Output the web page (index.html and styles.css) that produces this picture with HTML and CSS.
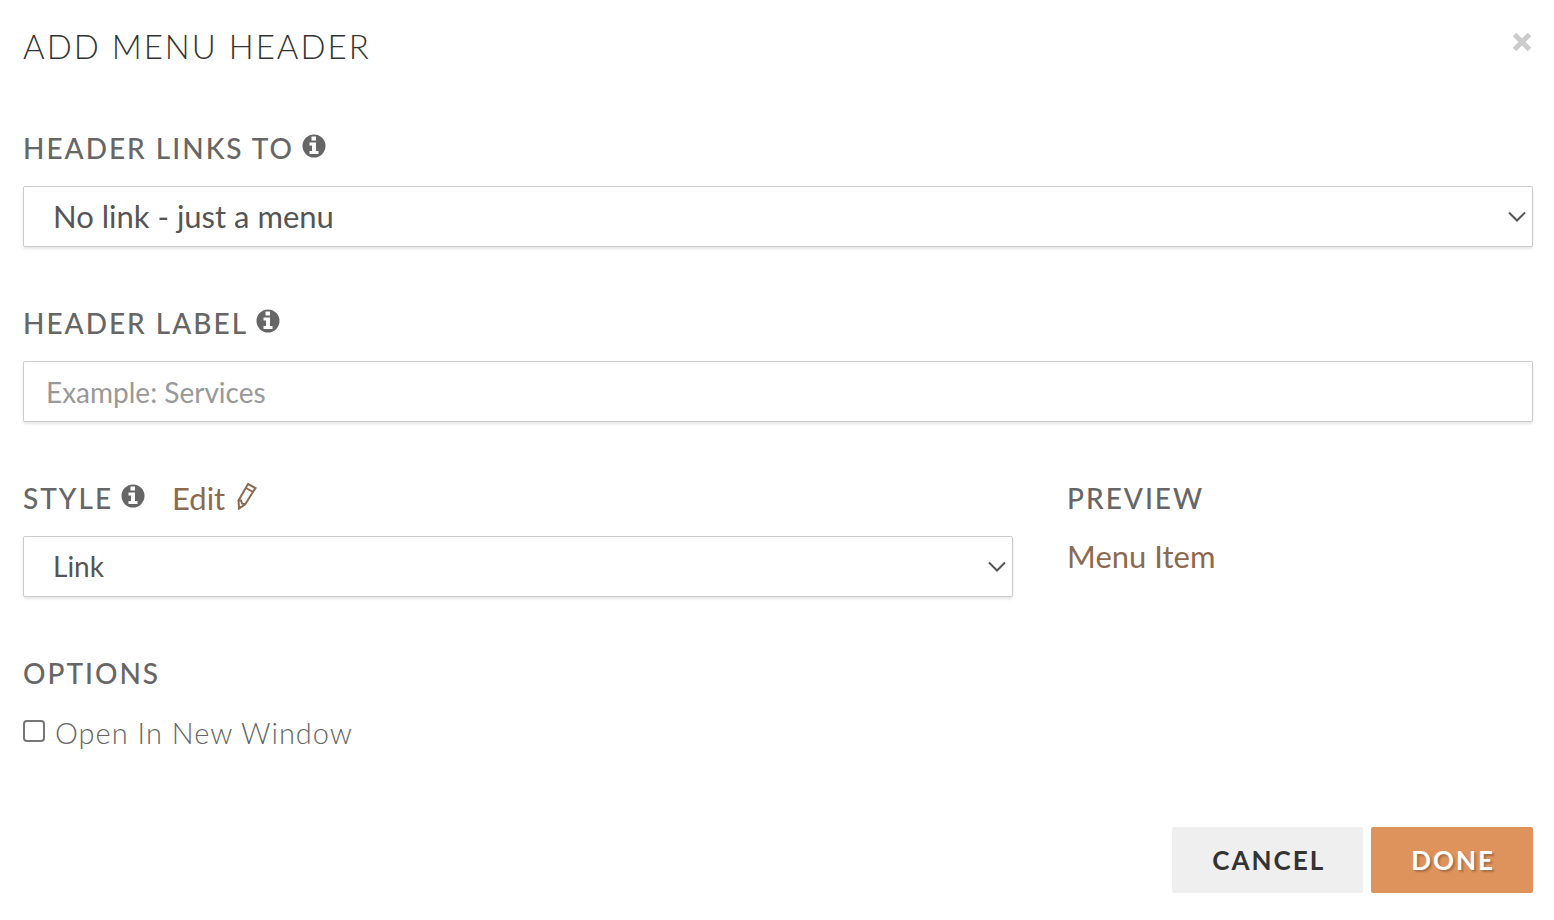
FILE: index.html
```
<!DOCTYPE html>
<html lang="en">
  <head>
    <meta charset="UTF-8">
    <title>Add Menu Header</title>
    <meta name="viewport" content="width=device-width, initial-scale=1">
    <link rel="stylesheet" href="styles.css">
  </head>
  <body>
    <svg class="symbols" aria-hidden="true">
      <symbol id="info" viewBox="0 0 24 24">
        <path fill-rule="evenodd" d="M12 0.5a11.5 11.5 0 1 0 0 23a11.5 11.5 0 1 0 0-23zM9.500 2.500h4.500v4h-4.500zM7.500 8.500h6.500v8.500h2.500v3H7.500v-3h2.500v-5.500H7.500z"/>
      </symbol>
    </svg>
    <form class="dialog">
      <header class="dialog-header">
        <h1>ADD MENU HEADER</h1>
        <button type="button" class="close" aria-label="Close">
          <svg width="20" height="20" viewBox="0 0 20 20"><path d="M2.500 2.500L17.500 17.500M17.500 2.500L2.500 17.500"/></svg>
        </button>
      </header>

      <div class="field">
        <div class="label-row">
          <label for="links-to">HEADER LINKS TO</label>
          <svg class="info"><use href="#info"/></svg>
        </div>
        <div class="select">
          <select id="links-to" class="large">
            <option>No link - just a menu</option>
          </select>
          <svg class="chevron" viewBox="0 0 18 12"><path d="M1 1.500L9 9.500L17 1.500"/></svg>
        </div>
      </div>

      <div class="field">
        <div class="label-row">
          <label for="header-label">HEADER LABEL</label>
          <svg class="info"><use href="#info"/></svg>
        </div>
        <input type="text" id="header-label" placeholder="Example: Services">
      </div>

      <div class="columns">
        <div class="field">
          <div class="label-row">
            <label for="style">STYLE</label>
            <svg class="info"><use href="#info"/></svg>
            <a href="#" class="edit">Edit
              <svg class="pencil" viewBox="0 0 20 28"><path d="M11 2L18.500 6L8 22.500L2 26.500L1.500 18.500zM9 6L16 10M1.500 18.500L4 18.500L5 21.500L8 22.500"/><path class="tip" d="M1.500 23L5 25L2 27z"/></svg>
            </a>
          </div>
          <div class="select">
            <select id="style">
              <option>Link</option>
            </select>
            <svg class="chevron" viewBox="0 0 18 12"><path d="M1 1.500L9 9.500L17 1.500"/></svg>
          </div>
        </div>
        <div class="preview">
          <h2>PREVIEW</h2>
          <a href="#">Menu Item</a>
        </div>
      </div>

      <section class="options">
        <h2>OPTIONS</h2>
        <label class="check">
          <input type="checkbox">
          Open In New Window
        </label>
      </section>

      <footer class="buttons">
        <button type="button" class="cancel">CANCEL</button>
        <button type="submit" class="done">DONE</button>
      </footer>
    </form>
  </body>
</html>
```
FILE: styles.css
```
* {
  box-sizing: border-box;
}
body {
  margin: 0;
  background: white;
  color: #666;
  font-family: Lato, "Open Sans", sans-serif;
  font-size: 28px;
  line-height: 36px;
}
a {
  color: #8c6a4f;
  text-decoration: none;
}
a:hover {
  text-decoration: underline;
}
.symbols {
  display: none;
}
.dialog {
  padding: 24px 21px 27px 23px;
}
.dialog-header {
  display: flex;
  justify-content: space-between;
  align-items: flex-start;
  margin-bottom: 62px;
}
h1 {
  margin: 0;
  color: #333;
  font-size: 33px;
  font-weight: 300;
  line-height: 44px;
  letter-spacing: 2px;
}
.close {
  display: flex;
  padding: 8px 1px;
  border: 0;
  background: none;
  cursor: pointer;
}
.close path {
  fill: none;
  stroke: #ccc;
  stroke-width: 5;
}

/* fields */
.field {
  margin-bottom: 58px;
}
.label-row {
  display: flex;
  align-items: center;
  margin-bottom: 20px;
}
.label-row label,
h2 {
  margin: 0;
  font-size: 28px;
  font-weight: 500;
  line-height: 36px;
  letter-spacing: 2px;
}
.info {
  width: 24px;
  height: 24px;
  margin: 0 0 4px 8px;
  fill: #666;
}
.edit {
  display: flex;
  align-items: center;
  margin-left: 27px;
  font-size: 31px;
}
.pencil {
  width: 20px;
  height: 28px;
  margin: 0 0 4px 12px;
  fill: none;
  stroke: #8c6a4f;
  stroke-width: 2;
}
.pencil .tip {
  fill: #8c6a4f;
  stroke: none;
}
.select {
  position: relative;
}
select,
input[type=text] {
  display: block;
  width: 100%;
  height: 61px;
  border: 1px solid #ccc;
  border-radius: 2px;
  background: white;
  box-shadow: 0 2px 3px rgba(0,0,0,0.1);
  color: #555;
  font: inherit;
  font-size: 28px;
}
select {
  appearance: none;
  padding: 0 48px 2px 29px;
}
select.large {
  font-size: 31px;
}
input[type=text] {
  padding: 0 22px;
}
input::placeholder {
  color: #999;
}
.chevron {
  position: absolute;
  right: 7px;
  top: 25px;
  width: 18px;
  height: 12px;
  fill: none;
  stroke: #555;
  stroke-width: 2;
  pointer-events: none;
}

.columns {
  display: grid;
  grid-template-columns: 68fr 32fr;
  gap: 54px;
}
.preview a {
  display: block;
  margin-top: 22px;
  font-size: 31px;
}

/* options */
.check {
  display: flex;
  align-items: center;
  gap: 10px;
  margin-top: 24px;
  font-size: 29px;
  font-weight: 300;
  letter-spacing: 1px;
}
.check input {
  appearance: none;
  width: 22px;
  height: 22px;
  margin: 0 0 4px;
  border: 2px solid #767676;
  border-radius: 4px;
}
.check input:checked {
  background: #767676;
}

.buttons {
  display: flex;
  justify-content: flex-end;
  gap: 8px;
  margin-top: 76px;
}
.buttons button {
  height: 66px;
  padding: 0 38px 0 40px;
  border: 0;
  border-radius: 2px;
  font: inherit;
  font-size: 26px;
  font-weight: 700;
  letter-spacing: 2px;
  cursor: pointer;
}
.cancel {
  background: #efefef;
  color: #333;
}
.buttons .done {
  background: #df935c;
  color: white;
  text-shadow: 2px 2px 2px rgba(0,0,0,0.25);
}
```
